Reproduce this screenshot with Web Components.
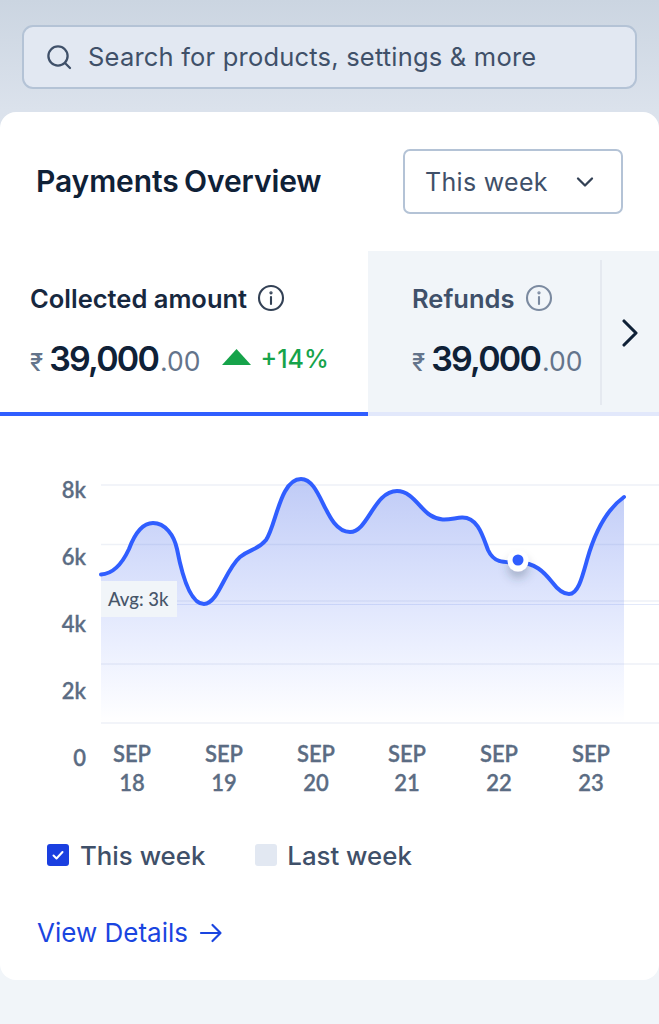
<!DOCTYPE html>
<html>
<head>
<meta charset="utf-8">
<title>Payments Overview</title>
<style>
  html, body { margin: 0; padding: 0; }
  body {
    width: 659px;
    height: 1024px;
    overflow: hidden;
    font-family: Inter, "Noto Sans", sans-serif;
    background: linear-gradient(180deg, #cbd5e1 0, #dbe2ec 110px, #e6ebf2 350px, #f1f5f9 800px);
  }
</style>
</head>
<body>
<search-bar placeholder="Search for products, settings &amp; more"></search-bar>
<overview-card>
  <select-box slot="action">This week</select-box>
  <metric-tabs slot="tabs"></metric-tabs>
  <area-chart slot="chart"></area-chart>
  <chart-legend slot="legend"></chart-legend>
</overview-card>

<script>
class SearchBar extends HTMLElement {
  constructor() {
    super()
    const shadowRoot = this.attachShadow({ mode: 'open' })
    shadowRoot.innerHTML = `
      <style>
        :host { display: block; padding: 25px 22px 23px; }
        div {
          box-sizing: border-box;
          height: 64px;
          display: flex;
          align-items: center;
          gap: 14px;
          padding-left: 20px;
          padding-bottom: 1px;
          background: #e2e8f2;
          border: 2px solid #b4c3d6;
          border-radius: 11px;
          color: #3f5069;
          font-size: 25.5px;
          letter-spacing: 0.2px;
        }
        svg { display: block; flex: none; }
      </style>
      <div>
        <svg width="30" height="30" viewBox="0 0 30 30" fill="none" stroke="#3f5069" stroke-width="2.3" stroke-linecap="round">
          <circle cx="14" cy="14" r="9.6"/><path d="M21 21l5 5"/>
        </svg>
        <span>${this.getAttribute('placeholder').replace('&', '&amp;')}</span>
      </div>
    `
  }
}
customElements.define('search-bar', SearchBar)

class OverviewCard extends HTMLElement {
  constructor() {
    super()
    const shadowRoot = this.attachShadow({ mode: 'open' })
    shadowRoot.innerHTML = `
      <style>
        :host {
          display: block;
          height: 868px;
          background: #fff;
          border-radius: 16px;
          color: #0f2137;
        }
        header {
          height: 139px;
          box-sizing: border-box;
          padding: 37px 36px 0 36px;
          display: flex;
          justify-content: space-between;
          align-items: flex-start;
        }
        h1 {
          margin: 0;
          height: 65px;
          line-height: 65px;
          font-size: 30px;
          font-weight: 600;
          letter-spacing: -0.1px;
          word-spacing: -2px;
          color: #0f2137;
        }
        a {
          display: flex;
          align-items: center;
          gap: 11px;
          margin: 48px 0 0 37px;
          color: #1a45e0;
          font-size: 26px;
          line-height: 30px;
          text-decoration: none;
        }
        svg { display: block; }
      </style>
      <header>
        <h1>Payments Overview</h1>
        <slot name="action"></slot>
      </header>
      <slot name="tabs"></slot>
      <slot name="chart"></slot>
      <slot name="legend"></slot>
      <a href="#">View Details
        <svg width="24" height="24" viewBox="0 0 24 24" fill="none" stroke="#1a45e0" stroke-width="2.2" stroke-linecap="round" stroke-linejoin="round">
          <path d="M2 12h19M13.5 4l8 8-8 8"/>
        </svg>
      </a>
    `
  }
}
customElements.define('overview-card', OverviewCard)

class SelectBox extends HTMLElement {
  constructor() {
    super()
    const shadowRoot = this.attachShadow({ mode: 'open' })
    shadowRoot.innerHTML = `
      <style>
        :host {
          display: flex;
          box-sizing: border-box;
          width: 220px;
          height: 65px;
          align-items: center;
          justify-content: space-between;
          padding: 0 26px 0 20px;
          border: 2px solid #b4c3d6;
          border-radius: 7px;
          color: #3f5069;
          font-size: 25px;
          letter-spacing: 0.3px;
        }
        svg { display: block; }
      </style>
      <slot></slot>
      <svg width="20" height="12" viewBox="0 0 20 12" fill="none" stroke="#334155" stroke-width="2.3" stroke-linecap="round" stroke-linejoin="round">
        <path d="M3 2.5l7 7 7-7"/>
      </svg>
    `
  }
}
customElements.define('select-box', SelectBox)

class AmountValue extends HTMLElement {
  constructor() {
    super()
    const shadowRoot = this.attachShadow({ mode: 'open' })
    shadowRoot.innerHTML = `
      <style>
        :host { display: inline-flex; align-items: baseline; color: #0f2137; }
        .cur { font-size: 24px; color: #64748b; margin-right: 6px; font-weight: 500; }
        .big { font-size: 34px; font-weight: 600; letter-spacing: -1.8px; }
        .dec { font-size: 26.5px; color: #64748b; margin-left: 2px; }
      </style>
      <span class="cur">₹</span><span class="big">39,000</span><span class="dec">.00</span>
    `
  }
}
customElements.define('amount-value', AmountValue)

class MetricTabs extends HTMLElement {
  constructor() {
    super()
    const info = (c) => `
      <svg width="28" height="28" viewBox="0 0 28 28" fill="none" stroke="${c}" stroke-width="2.1" stroke-linecap="round">
        <circle cx="14" cy="14" r="12"/><path d="M14 13v7"/><circle cx="14" cy="8.8" r="0.6" fill="${c}"/>
      </svg>`
    const shadowRoot = this.attachShadow({ mode: 'open' })
    shadowRoot.innerHTML = `
      <style>
        :host { display: flex; height: 165px; }
        section { box-sizing: border-box; border-bottom: 4px solid; }
        .on { width: 368px; padding: 32px 0 0 30px; border-color: #305eff; }
        .off {
          flex: 1;
          display: flex;
          padding-top: 9px;
          background: #f1f5f9;
          border-color: #e2e8fb;
        }
        .body { box-sizing: border-box; width: 234px; padding: 23px 0 0 44px; border-right: 2px solid #e5e9f0; height: 145px; }
        .more { flex: 1; display: flex; align-items: center; justify-content: center; padding-right: 2px; height: 145px; }
        .title { display: flex; align-items: center; gap: 10px; height: 30px; font-size: 25.5px; font-weight: 600; color: #17283f; }
        .off .title { color: #3f5069; gap: 11px; }
        .row { display: flex; align-items: center; margin-top: 25px; }
        .trend { display: flex; align-items: center; margin-left: 22px; color: #16a34a; font-size: 25px; font-weight: 500; gap: 9px; }
        .trend svg { margin-bottom: 4px; }
        svg { display: block; flex: none; }
      </style>
      <section class="on">
        <div class="title">Collected amount ${info('#334155')}</div>
        <div class="row">
          <amount-value></amount-value>
          <div class="trend">
            <svg width="29" height="16" viewBox="0 0 29 16"><path d="M14.5 0L29 16H0z" fill="#16a34a"/></svg>
            <span>+14%</span>
          </div>
        </div>
      </section>
      <section class="off">
        <div class="body">
          <div class="title">Refunds ${info('#7b8aa0')}</div>
          <div class="row"><amount-value></amount-value></div>
        </div>
        <div class="more">
          <svg width="18" height="28" viewBox="0 0 18 28" fill="none" stroke="#0f2137" stroke-width="3.1" stroke-linecap="round" stroke-linejoin="round">
            <path d="M3 2l12 12L3 26"/>
          </svg>
        </div>
      </section>
    `
  }
}
customElements.define('metric-tabs', MetricTabs)

class AreaChart extends HTMLElement {
  constructor() {
    super()
    const line = 'M101 574.5C112 574 122 564 129 549C135 533 143 523 153 523C165 523 174 535 177 549C182 575 190 604 204 604C218 604 225 570 240 557C250 549 258 550 266 540C276 526 280 479 301 479C322 479 325 532 350 532C368 532 374 491 397 491C412 491 420 509 430 515C442 523 452 518 462 517.5C478 517 483 537 488 550C494 563 503 562.5 518 562.5C535 562.5 544 572 552 582C558 590 563 594 569 594C578 594 582 578 587 560C594 535 606 510 624 497'
    const grid = [485, 544.5, 601, 664, 723]
    const yLabels = [['8k', 498], ['6k', 565], ['4k', 632], ['2k', 699]]
    const days = [[132, 18], [224, 19], [316, 20], [407, 21], [499, 22], [591, 23]]
    const shadowRoot = this.attachShadow({ mode: 'open' })
    shadowRoot.innerHTML = `
      <style>
        :host { display: block; height: 385px; }
        svg { display: block; }
        text { font-family: Lato, sans-serif; font-weight: 600; fill: #5b6c83; stroke: #5b6c83; stroke-width: 0.3px; }
        .y { font-size: 22px; text-anchor: end; }
        .x { font-size: 22px; text-anchor: middle; }
        .avg { font-size: 18.5px; fill: #475569; stroke: none; font-weight: 500; }
      </style>
      <svg width="659" height="385" viewBox="0 416 659 385">
        <defs>
          <linearGradient id="fill" gradientUnits="userSpaceOnUse" x1="0" y1="479" x2="0" y2="723">
            <stop offset="0" stop-color="#2a50e0" stop-opacity="0.3"/>
            <stop offset="1" stop-color="#305eff" stop-opacity="0"/>
          </linearGradient>
          <filter id="shadow" x="-100%" y="-100%" width="300%" height="300%">
            <feDropShadow dx="0" dy="7" stdDeviation="5" flood-color="#334155" flood-opacity="0.28"/>
          </filter>
        </defs>
        ${grid.map(y => `<path d="M101 ${y}H659" stroke="#eef1f7" stroke-width="1.5"/>`).join('')}
        <path d="M101 604.5H659" stroke="#e3e9fa" stroke-width="1.2"/>
        <path d="${line}V723H101Z" fill="url(#fill)"/>
        <path d="${line}" fill="none" stroke="#305eff" stroke-width="4" stroke-linecap="round"/>
        <rect x="101" y="581" width="76" height="36" fill="#f1f5f9"/>
        <text class="avg" x="108" y="606">Avg: 3k</text>
        <circle cx="518" cy="561" r="10.5" fill="#fff" filter="url(#shadow)"/>
        <circle cx="518" cy="560" r="5.5" fill="#305eff"/>
        ${yLabels.map(([t, y]) => `<text class="y" x="86" y="${y}">${t}</text>`).join('')}
        <text class="y" x="86" y="766">0</text>
        ${days.map(([x, d]) => `<text class="x" x="${x}" y="762">SEP</text><text class="x" x="${x}" y="791">${d}</text>`).join('')}
      </svg>
    `
  }
}
customElements.define('area-chart', AreaChart)

class ChartLegend extends HTMLElement {
  constructor() {
    super()
    const shadowRoot = this.attachShadow({ mode: 'open' })
    shadowRoot.innerHTML = `
      <style>
        :host {
          display: flex;
          align-items: center;
          height: 30px;
          margin-top: 39px;
          padding-left: 47px;
          color: #3f5069;
          font-size: 25.8px;
          font-weight: 500;
        }
        span { display: flex; align-items: center; gap: 11px; }
        span + span { margin-left: 50px; gap: 10px; }
        i { display: block; width: 22px; height: 22px; border-radius: 3px; background: #e2e8f2; }
        svg { display: block; }
      </style>
      <span>
        <svg width="22" height="22" viewBox="0 0 22 22">
          <rect width="22" height="22" rx="3" fill="#1a3fe0"/>
          <path d="M6.5 11.5l3 3 6-6.5" fill="none" stroke="#fff" stroke-width="2" stroke-linecap="round" stroke-linejoin="round"/>
        </svg>
        This week
      </span>
      <span><i></i>Last week</span>
    `
  }
}
customElements.define('chart-legend', ChartLegend)
</script>
</body>
</html>
